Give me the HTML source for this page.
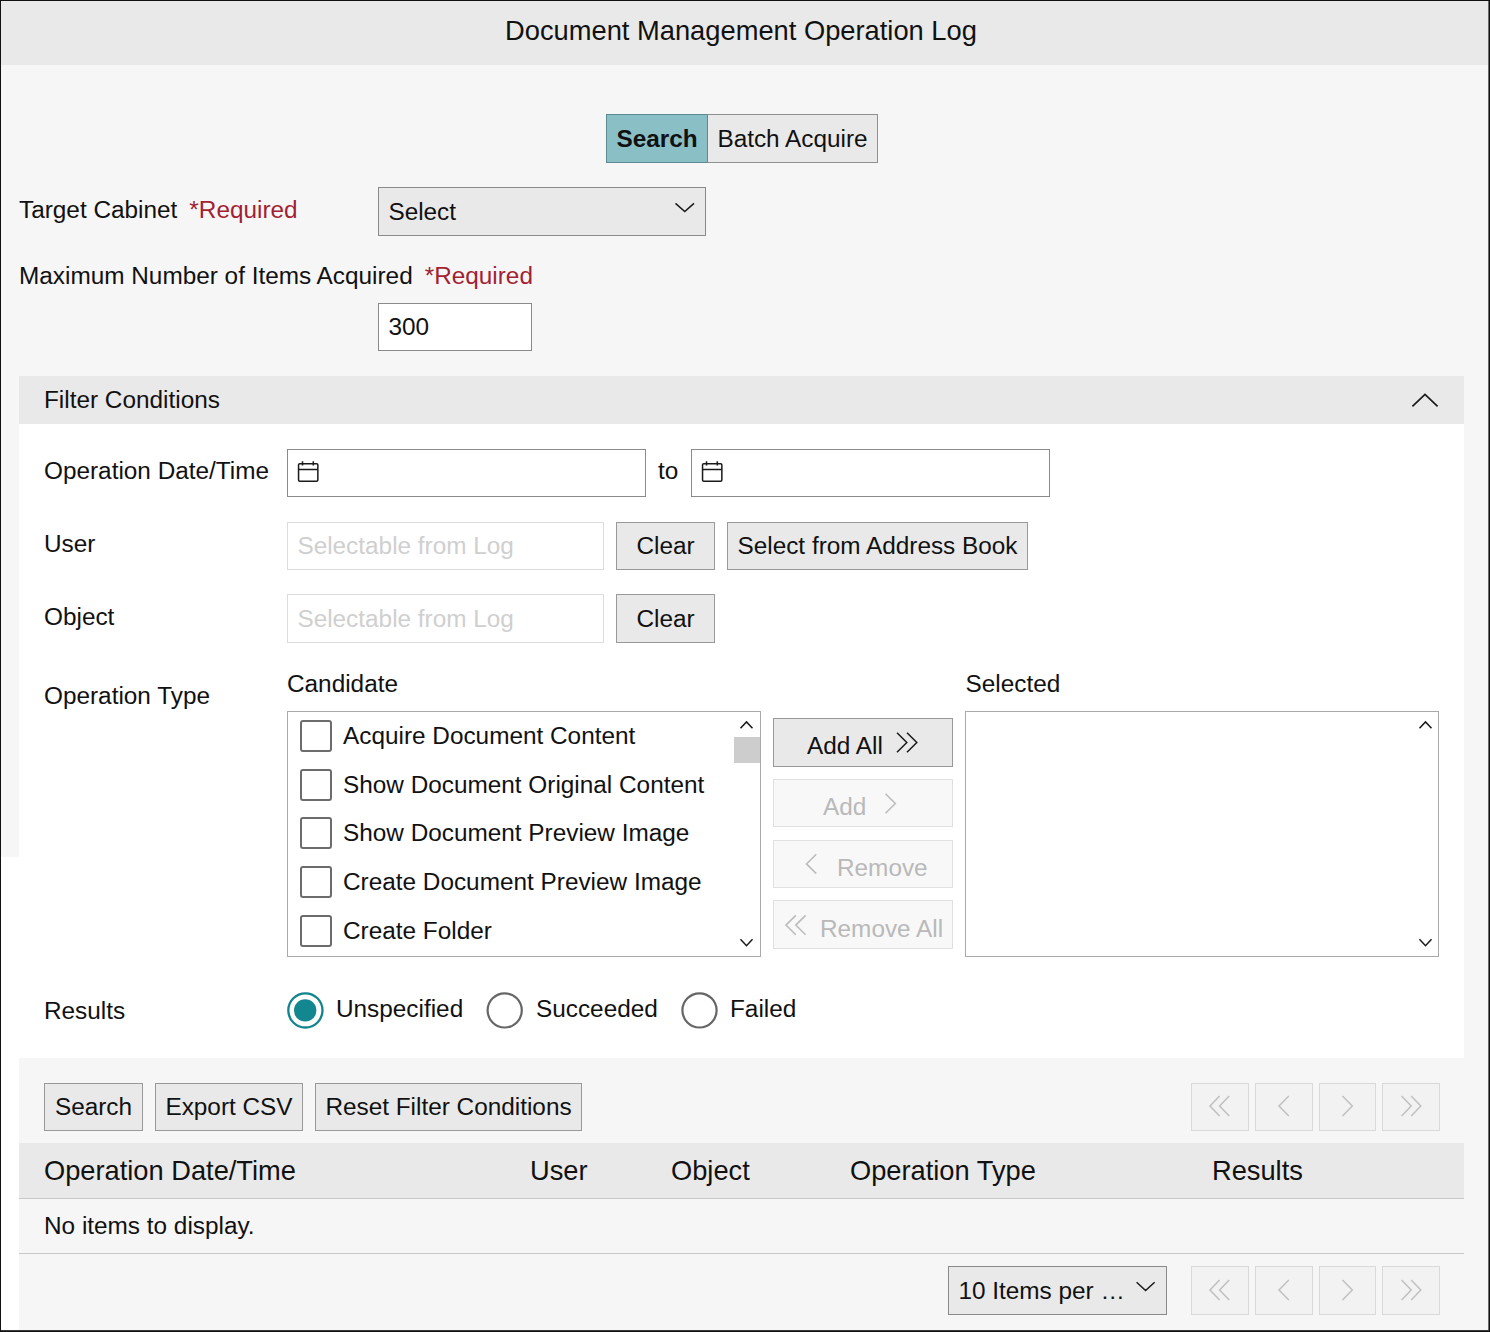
<!DOCTYPE html>
<html lang="en">
<head>
<meta charset="utf-8">
<title>Document Management Operation Log</title>
<style>
*{box-sizing:border-box;margin:0;padding:0}
html,body{width:1490px;height:1332px;overflow:hidden;background:#fff}
body{font-family:"Liberation Sans",sans-serif;font-size:24.35px;color:#111;position:relative}
.abs{position:absolute}
#frame{position:absolute;left:0;top:0;width:1490px;height:1332px;border-style:solid;border-color:#111;border-width:1px 1px 1px 1px;z-index:50;pointer-events:none}
#frame::before{content:"";position:absolute;right:0;top:0;width:1px;height:1329px;background:#6b6b6b}
#frame::after{content:"";position:absolute;left:0;bottom:0;width:1488px;height:1px;background:#3a3a3a}
#bg{position:absolute;left:1px;top:1px;width:1487px;height:1329px;background:#f6f6f6}
#leftwhite{position:absolute;left:1px;top:857px;width:18px;height:473px;background:#fff}
#titlebar{position:absolute;left:1px;top:1px;width:1487px;height:64px;background:#e9e9e9}
#titlebar h1{font-weight:normal;font-size:27.3px;line-height:65px;text-align:center;position:absolute;left:504px;top:-3px;white-space:nowrap}
.lbl{position:absolute;white-space:nowrap;line-height:30px;height:30px}
.req{color:#a31f33;margin-left:12px}
.btn{position:absolute;height:48px;line-height:46px;background:#e9e9e9;border:1px solid #999;text-align:center;white-space:nowrap;color:#111;font-size:24.35px;font-family:inherit}
.btn.mv{text-align:left;line-height:54px}
.btn.dis{background:#f8f8f8;border-color:#e0e0e0;color:#b9b9b9}
.btn.pg{background:#f2f2f2;border-color:#d9d9d9}
.inp{position:absolute;height:48px;background:#fff;border:1px solid #8a8a8a;line-height:46px;padding-left:9.4px;white-space:nowrap}
.inp.ro{border-color:#dcdcdc;color:#cfcfcf}
.sel{position:absolute;height:49px;background:#e9e9e9;border:1px solid #8a8a8a;line-height:47px;padding-left:9.4px;white-space:nowrap}
svg{position:absolute;overflow:visible}
.box{position:absolute;background:#fff;border:1px solid #a9a9a9}
.cb{position:absolute;left:12px;width:32px;height:32px;border:2px solid #6c6c6c;border-radius:3px;background:#fff}
.cbl{position:absolute;left:55px;white-space:nowrap;line-height:30px}
.th{position:absolute;top:0;line-height:55px;font-size:27.25px;white-space:nowrap}
</style>
</head>
<body>
<div id="bg"></div>
<div id="leftwhite"></div>
<header id="titlebar"><h1>Document Management Operation Log</h1></header>

<!-- tabs -->
<nav>
<div class="abs" style="left:606px;top:114px;width:102px;height:49px;background:#89bfc5;border:1px solid #5c8a90;line-height:47px;text-align:center;font-weight:bold">Search</div>
<div class="abs" style="left:707px;top:114px;width:171px;height:49px;background:#e9e9e9;border:1px solid #909090;border-left:1px solid #5c8a90;line-height:47px;text-align:center">Batch Acquire</div>
</nav>

<!-- top form -->
<div class="lbl" style="left:19px;top:195px">Target Cabinet<span class="req">*Required</span></div>
<div class="sel" style="left:378px;top:187px;width:328px">Select</div>
<div class="lbl" style="left:19px;top:261px">Maximum Number of Items Acquired<span class="req">*Required</span></div>
<div class="inp" style="left:378px;top:303px;width:154px">300</div>

<!-- filter conditions panel -->
<section>
<div class="abs" style="left:19px;top:376px;width:1445px;height:48px;background:#e9e9e9"></div>
<div class="lbl" style="left:44px;top:385px">Filter Conditions</div>
<div class="abs" style="left:19px;top:424px;width:1445px;height:634px;background:#fff"></div>

<div class="lbl" style="left:44px;top:456px">Operation Date/Time</div>
<div class="inp" style="left:287px;top:449px;width:359px"></div>
<div class="lbl" style="left:658px;top:456px">to</div>
<div class="inp" style="left:691px;top:449px;width:359px"></div>

<div class="lbl" style="left:44px;top:529px">User</div>
<div class="inp ro" style="left:287px;top:522px;width:317px">Selectable from Log</div>
<div class="btn" style="left:616px;top:522px;width:99px">Clear</div>
<div class="btn" style="left:727px;top:522px;width:301px">Select from Address Book</div>

<div class="lbl" style="left:44px;top:602px">Object</div>
<div class="inp ro" style="left:287px;top:594px;width:317px;height:49px;line-height:47px">Selectable from Log</div>
<div class="btn" style="left:616px;top:594px;width:99px;height:49px;line-height:47px">Clear</div>

<div class="lbl" style="left:44px;top:681px">Operation Type</div>
<div class="lbl" style="left:287px;top:669px">Candidate</div>
<div class="box" style="left:287px;top:711px;width:474px;height:246px">
  <div class="cb" style="top:8px"></div><div class="cbl" style="top:9px">Acquire Document Content</div>
  <div class="cb" style="top:57px"></div><div class="cbl" style="top:58px">Show Document Original Content</div>
  <div class="cb" style="top:105px"></div><div class="cbl" style="top:106px">Show Document Preview Image</div>
  <div class="cb" style="top:154px"></div><div class="cbl" style="top:155px">Create Document Preview Image</div>
  <div class="cb" style="top:203px"></div><div class="cbl" style="top:204px">Create Folder</div>
  <div class="abs" style="left:446px;top:25px;width:26px;height:26px;background:#cdcdcd"></div>
</div>

<div class="btn mv" style="left:773px;top:718px;width:180px;height:49px;padding-left:33px">Add All</div>
<div class="btn mv dis" style="left:773px;top:779px;width:180px;height:48px;padding-left:49px">Add</div>
<div class="btn mv dis" style="left:773px;top:840px;width:180px;height:48px;padding-left:63px">Remove</div>
<div class="btn mv dis" style="left:773px;top:900px;width:180px;height:49px;padding-left:46px;line-height:56px">Remove All</div>

<div class="lbl" style="left:965.5px;top:669px">Selected</div>
<div class="box" style="left:965px;top:711px;width:474px;height:246px"></div>

<div class="lbl" style="left:44px;top:996px">Results</div>
<div class="lbl" style="left:336px;top:994px">Unspecified</div>
<div class="lbl" style="left:536px;top:994px">Succeeded</div>
<div class="lbl" style="left:730px;top:994px">Failed</div>
</section>

<!-- action bar -->
<div class="btn" style="left:44px;top:1083px;width:99px">Search</div>
<div class="btn" style="left:155px;top:1083px;width:148px">Export CSV</div>
<div class="btn" style="left:315px;top:1083px;width:267px">Reset Filter Conditions</div>

<div class="btn dis pg" style="left:1191px;top:1083px;width:58px"></div>
<div class="btn dis pg" style="left:1255px;top:1083px;width:58px"></div>
<div class="btn dis pg" style="left:1319px;top:1083px;width:57px"></div>
<div class="btn dis pg" style="left:1382px;top:1083px;width:58px"></div>

<!-- table -->
<div class="abs" style="left:19px;top:1143px;width:1445px;height:56px;background:#e9e9e9;border-bottom:1px solid #c8c8c8">
  <div class="th" style="left:25px">Operation Date/Time</div>
  <div class="th" style="left:511px">User</div>
  <div class="th" style="left:652px">Object</div>
  <div class="th" style="left:831px">Operation Type</div>
  <div class="th" style="left:1193px">Results</div>
</div>
<div class="abs" style="left:19px;top:1199px;width:1445px;height:55px;border-bottom:1px solid #c8c8c8"></div>
<div class="lbl" style="left:44px;top:1211px">No items to display.</div>

<div class="sel" style="left:948px;top:1266px;width:219px">10 Items per …</div>
<div class="btn dis pg" style="left:1191px;top:1266px;width:58px;height:49px"></div>
<div class="btn dis pg" style="left:1255px;top:1266px;width:58px;height:49px"></div>
<div class="btn dis pg" style="left:1319px;top:1266px;width:57px;height:49px"></div>
<div class="btn dis pg" style="left:1382px;top:1266px;width:58px;height:49px"></div>

<svg id="icons" style="left:0;top:0;z-index:40" width="1490" height="1332" viewBox="0 0 1490 1332" aria-hidden="true">
<path d="M1412.4 406.4L1425 394.4L1437.6 406.4" fill="none" stroke="#1a1a1a" stroke-width="1.7"/>
<path d="M675.5 203.4L684.75 211.6L694 203.4M1136.6 1282.3L1145.6 1290.5L1154.6 1282.3M740.5 728.3L746.5 721.9L752.5 728.3M740.5 939.3L746.5 945.7L752.5 939.3M1419.5 728.3L1425.5 721.9L1431.5 728.3M1419.5 939.3L1425.5 945.7L1431.5 939.3M897 732.8L906.8 742.5L897 752.2M907 732.8L916.8 742.5L907 752.2" fill="none" stroke="#1a1a1a" stroke-width="1.5"/>
<path d="M885.5 793.8L895.3 803.5L885.5 813.2M816.3 854.2L806.5 863.9L816.3 873.6M795.8 915.4L786 925.1L795.8 934.8M805.6 915.4L795.8 925.1L805.6 934.8" fill="none" stroke="#bdbdbd" stroke-width="1.6"/>
<path d="M1219.6 1096L1210 1106L1219.6 1116M1229.2 1096L1219.6 1106L1229.2 1116M1288.8 1096L1279 1106L1288.8 1116M1342.5 1096L1352.3 1106L1342.5 1116M1401.6 1096L1411.2 1106L1401.6 1116M1411.2 1096L1420.8 1106L1411.2 1116M1219.6 1280L1210 1290L1219.6 1300M1229.2 1280L1219.6 1290L1229.2 1300M1288.8 1280L1279 1290L1288.8 1300M1342.5 1280L1352.3 1290L1342.5 1300M1401.6 1280L1411.2 1290L1401.6 1300M1411.2 1280L1420.8 1290L1411.2 1300" fill="none" stroke="#c0c0c0" stroke-width="1.5"/>
<rect x="298.55" y="463.65" width="19.3" height="17.6" rx="1.2" fill="none" stroke="#1a1a1a" stroke-width="1.5"/><path d="M298.55 469.5H317.85M302.5 461.2V465.6M313.3 461.2V465.6" fill="none" stroke="#1a1a1a" stroke-width="1.5"/>
<rect x="702.55" y="463.65" width="19.3" height="17.6" rx="1.2" fill="none" stroke="#1a1a1a" stroke-width="1.5"/><path d="M702.55 469.5H721.85M706.5 461.2V465.6M717.3 461.2V465.6" fill="none" stroke="#1a1a1a" stroke-width="1.5"/>
<circle cx="305.4" cy="1010.4" r="17.1" fill="#fff" stroke="#12848e" stroke-width="2.3"/><circle cx="305.2" cy="1010.4" r="11.2" fill="#12878f"/>
<circle cx="504.7" cy="1010.4" r="17.1" fill="#fff" stroke="#666" stroke-width="2.2"/>
<circle cx="699.5" cy="1010.4" r="17.1" fill="#fff" stroke="#666" stroke-width="2.2"/>
</svg>
<div id="frame"></div>
</body>
</html>
